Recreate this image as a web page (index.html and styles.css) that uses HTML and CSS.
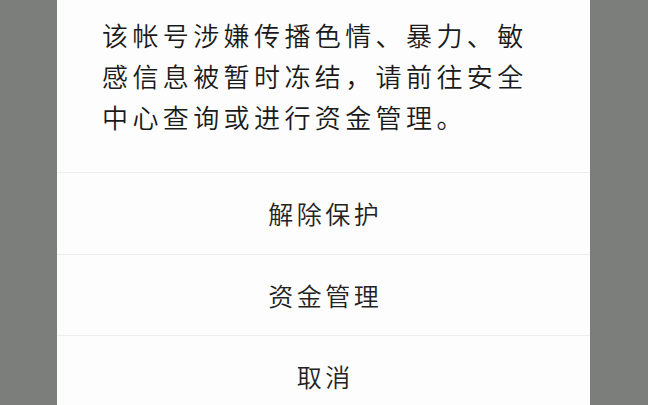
FILE: index.html
```html
<!DOCTYPE html>
<html lang="zh-CN">
<head>
<meta charset="utf-8">
<link rel="stylesheet" href="styles.css">
</head>
<body>
<div class="screen">
  <div class="dialog">
    <div class="message">该帐号涉嫌传播色情、暴力、敏感信息被暂时冻结，请前往安全中心查询或进行资金管理。</div>
    <div class="action">解除保护</div>
    <div class="action">资金管理</div>
    <div class="action">取消</div>
  </div>
</div>
</body>
</html>
```
FILE: styles.css
```css
html, body {
  margin: 0;
  padding: 0;
  height: 100%;
  overflow: hidden;
  background: #7b7e7a;
}
.screen {
  display: flex;
  justify-content: flex-start;
  height: 405px;
  padding-left: 57px;
}
.dialog {
  width: 533px;
  background: #fcfdfc;
  display: flex;
  flex-direction: column;
  font-family: "Noto Sans CJK SC", sans-serif;
}
.message {
  flex-shrink: 0;
  padding: 14px 0 35px 45px;
  width: 430px;
  font-size: 26px;
  line-height: 41px;
  letter-spacing: 4.4px;
  color: #1a1a1a;
  font-weight: 350;
}
.action {
  flex-shrink: 0;
  box-sizing: border-box;
  height: 81.5px;
  border-top: 1.5px solid #ececec;
  display: flex;
  align-items: center;
  justify-content: center;
  font-size: 25px;
  letter-spacing: 3.5px;
  text-indent: 3.5px;
  color: #222;
  font-weight: 350;
}
```
